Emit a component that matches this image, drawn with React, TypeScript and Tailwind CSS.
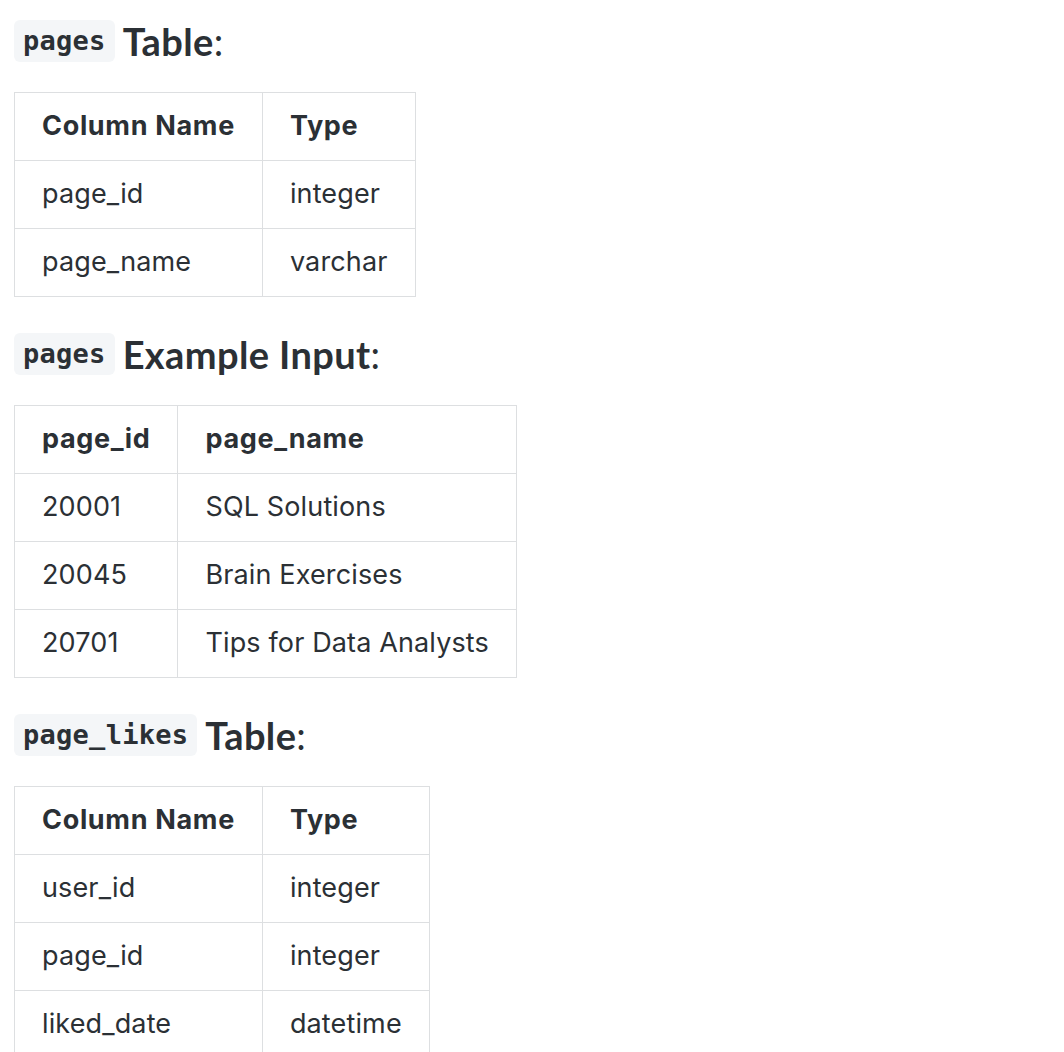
const body = "font-['Inter',sans-serif]";

function Heading({ code, title }: { code: string; title: string }) {
  return (
    <h3 className="flex items-center gap-[8px] text-[#2b3035]">
      <code className="rounded-[6px] bg-[#f4f6f8] px-[9px] py-[3px] font-['DejaVu_Sans_Mono',monospace] text-[27px] font-bold leading-[36px] tracking-[0.01em]">
        {code}
      </code>
      <span className="font-['Lato',sans-serif] text-[38px] font-bold leading-[42px] tracking-[0.01em]">
        {title}
        <span className="font-normal">:</span>
      </span>
    </h3>
  );
}

function DataTable({ head, rows }: { head: string[]; rows: string[][] }) {
  return (
    <table className={`border-collapse border border-[#dddfe1] text-[27px] text-[#2b3035] ${body}`}>
      <thead>
        <tr>
          {head.map((h) => (
            <th
              key={h}
              className="h-[68px] border border-[#dddfe1] px-[27px] text-left font-bold tracking-[0.025em]"
            >
              {h}
            </th>
          ))}
        </tr>
      </thead>
      <tbody>
        {rows.map((r, i) => (
          <tr key={i}>
            {r.map((c, j) => (
              <td key={j} className="h-[68px] border border-[#dddfe1] px-[27px] tracking-[0.005em]">
                {c}
              </td>
            ))}
          </tr>
        ))}
      </tbody>
    </table>
  );
}

export default function App() {
  return (
    <div className="h-[1052px] overflow-hidden bg-white px-[14px] pt-[20px]">
      <Heading code="pages" title="Table" />
      <div className="mt-[30px]">
        <DataTable
          head={["Column Name", "Type"]}
          rows={[
            ["page_id", "integer"],
            ["page_name", "varchar"],
          ]}
        />
      </div>
      <div className="mt-[36px]">
        <Heading code="pages" title="Example Input" />
      </div>
      <div className="mt-[30px]">
        <DataTable
          head={["page_id", "page_name"]}
          rows={[
            ["20001", "SQL Solutions"],
            ["20045", "Brain Exercises"],
            ["20701", "Tips for Data Analysts"],
          ]}
        />
      </div>
      <div className="mt-[36px]">
        <Heading code="page_likes" title="Table" />
      </div>
      <div className="mt-[30px]">
        <DataTable
          head={["Column Name", "Type"]}
          rows={[
            ["user_id", "integer"],
            ["page_id", "integer"],
            ["liked_date", "datetime"],
          ]}
        />
      </div>
    </div>
  );
}
